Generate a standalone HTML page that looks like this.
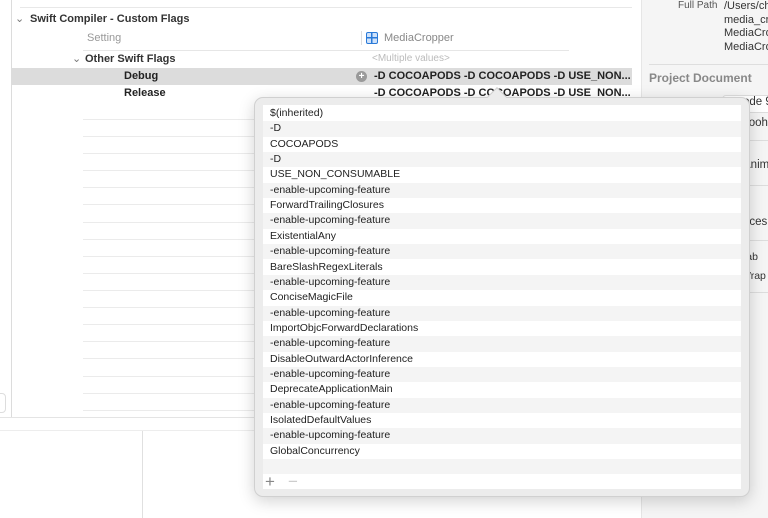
<!DOCTYPE html>
<html><head><style>
*{margin:0;padding:0;box-sizing:border-box}
body{width:768px;height:518px;overflow:hidden;background:#fff;font-family:"Liberation Sans",sans-serif;position:relative;color:#222}
.a{position:absolute;white-space:nowrap}
.hl{position:absolute;height:1px;background:#e6e6e6}
.b{font-weight:bold}
</style></head><body>
<div class="a" style="left:11px;top:0;width:1px;height:417px;background:#dcdcdc"></div>
<div class="a" style="left:-6px;top:393px;width:12px;height:20px;border:1px solid #ddd;border-radius:4px"></div>
<div class="hl" style="left:20px;top:7px;width:612px;background:#e8e8e8"></div>
<div class="a" style="left:15px;top:12px;font-size:11px;color:#777">&#8964;</div>
<div class="a b" style="left:30px;top:13px;font-size:11px;color:#333">Swift Compiler - Custom Flags</div>
<div class="a" style="left:87px;top:32px;font-size:11px;color:#999">Setting</div>
<div class="a" style="left:361px;top:31px;width:1px;height:14px;background:#ddd"></div>
<div class="a" style="left:366px;top:32px;width:12px;height:12px;border:1.5px solid #2a7ad8;border-radius:2px;background:linear-gradient(#2a7ad8,#2a7ad8) center/1.5px 100% no-repeat,linear-gradient(#2a7ad8,#2a7ad8) center/100% 1.5px no-repeat,#cfe2fa"></div>
<div class="a" style="left:384px;top:32px;font-size:11px;color:#888">MediaCropper</div>
<div class="hl" style="left:83px;top:50px;width:486px"></div>
<div class="a" style="left:72px;top:52px;font-size:11px;color:#777">&#8964;</div>
<div class="a b" style="left:85px;top:53px;font-size:11px;color:#333">Other Swift Flags</div>
<div class="a" style="left:372px;top:53px;font-size:10px;color:#bbb">&lt;Multiple values&gt;</div>
<div class="a" style="left:12px;top:68px;width:620px;height:17px;background:#dcdcdc"></div>
<div class="a" style="left:356px;top:71px;width:11px;height:11px;border-radius:50%;background:#999;color:#fff;font-size:10px;line-height:11px;text-align:center;font-weight:bold">+</div>
<div class="a b" style="left:124px;top:70px;font-size:11px;color:#222">Debug</div>
<div class="a b" style="left:374px;top:70px;font-size:11px;color:#222">-D COCOAPODS -D COCOAPODS -D USE_NON...</div>
<div class="a b" style="left:124px;top:87px;font-size:11px;color:#222">Release</div>
<div class="a b" style="left:374px;top:87px;font-size:11px;color:#222">-D COCOAPODS -D COCOAPODS -D USE_NON...</div>
<div id="lines"></div>
<div class="hl" style="left:0;top:417px;width:641px;background:#e4e4e4"></div>
<div class="a" style="left:142px;top:430px;width:1px;height:88px;background:#e0e0e0"></div>
<div class="hl" style="left:0;top:430px;width:641px;background:#ededed"></div>
<div class="a" style="left:641px;top:0;width:127px;height:518px;background:#f5f5f5;border-left:1px solid #e6e6e6"></div>
<div class="a" style="left:678px;top:0;font-size:10px;color:#555">Full Path</div>
<div class="a" style="left:724px;top:0;font-size:11px;line-height:13.5px;color:#333">/Users/ch<br>media_cr<br>MediaCro<br>MediaCro</div>
<div class="hl" style="left:649px;top:64px;width:119px;background:#dedede"></div>
<div class="a b" style="left:649px;top:71px;font-size:12px;color:#888">Project Document</div>
<div class="a" style="left:722px;top:95px;width:60px;height:18px;background:#fff;border:1px solid #ddd;border-radius:4px"></div>
<div class="a" style="left:743px;top:96px;font-size:11.5px;color:#333">ode 9</div>
<div class="a" style="left:743px;top:117px;font-size:11.5px;color:#333">Tooh</div>
<div class="a" style="left:743px;top:159px;font-size:11.5px;color:#333">Anim</div>
<div class="a" style="left:743px;top:216px;font-size:11.5px;color:#333">nces</div>
<div class="a" style="left:741px;top:251px;font-size:10.5px;color:#333">Tab</div>
<div class="a" style="left:741px;top:270px;font-size:10.5px;color:#333">Wrap</div>
<div class="hl" style="left:722px;top:140px;width:46px;background:#ddd"></div>
<div class="hl" style="left:722px;top:185px;width:46px;background:#ddd"></div>
<div class="hl" style="left:722px;top:240px;width:46px;background:#ddd"></div>
<div class="hl" style="left:722px;top:292px;width:46px;background:#ddd"></div>
<div class="a" style="left:254px;top:97px;width:496px;height:400px;background:#ececec;border:1px solid #d0d0d0;border-radius:9px;box-shadow:0 4px 16px rgba(0,0,0,.18)"></div>
<div class="a" style="left:490px;top:90px;width:14px;height:14px;background:#ececec;transform:rotate(45deg);border-left:1px solid #d0d0d0;border-top:1px solid #d0d0d0"></div>
<div class="a" style="left:263px;top:105px;width:478px;height:384px;background:#fff" id="list"></div>
<div class="a" style="left:265px;top:472px;font-size:17px;color:#888;font-weight:300">+</div>
<div class="a" style="left:288px;top:472px;font-size:17px;color:#ccc">&minus;</div>
<script>
var L=document.getElementById('lines'),h='';
for(var y=119;y<=415;y+=17.1)h+='<div class="hl" style="left:83px;top:'+Math.round(y)+'px;width:180px;background:#ebebeb"></div>';
L.innerHTML=h;
var items=["$(inherited)","-D","COCOAPODS","-D","USE_NON_CONSUMABLE","-enable-upcoming-feature","ForwardTrailingClosures","-enable-upcoming-feature","ExistentialAny","-enable-upcoming-feature","BareSlashRegexLiterals","-enable-upcoming-feature","ConciseMagicFile","-enable-upcoming-feature","ImportObjcForwardDeclarations","-enable-upcoming-feature","DisableOutwardActorInference","-enable-upcoming-feature","DeprecateApplicationMain","-enable-upcoming-feature","IsolatedDefaultValues","-enable-upcoming-feature","GlobalConcurrency",""];
var s='';
items.forEach(function(t,i){s+='<div style="position:absolute;left:0;top:'+(1+i*15.35)+'px;width:478px;height:15.35px;background:'+(i%2?'#f4f4f4':'#fff')+';font-size:10.5px;line-height:15.35px;padding-left:7px;color:#222">'+t+'</div>'});
document.getElementById('list').innerHTML=s;
</script>
</body></html>
